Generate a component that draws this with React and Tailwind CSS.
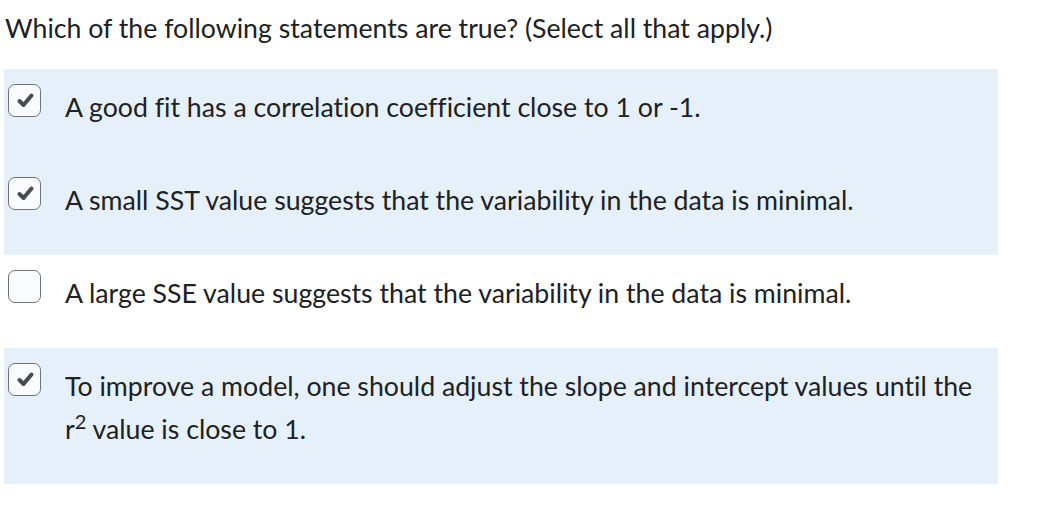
import React from "react";

function Check() {
  return (
    <svg width="31" height="31" viewBox="0 0 31 31" fill="none">
      <path d="M10.5 16 L14.5 20 L22.5 10.5" stroke="#494c4e" strokeWidth="4" strokeLinecap="round" strokeLinejoin="round" />
    </svg>
  );
}

function Row({ checked, children }) {
  return (
    <div className={`flex items-start pl-[4px] pr-[8px] pt-[15px] pb-[33px] ${checked ? "bg-[#e6f0fa]" : "bg-white"}`}>
      <div className="w-[33px] h-[33px] shrink-0 rounded-[7px] border border-[#6e7477] bg-[#f9fbff] flex items-center justify-center">
        {checked && <Check />}
      </div>
      <div className="ml-[24px] mt-[2px] text-[26.7px] leading-[43px] text-[#202122] [font-variant-ligatures:none]">{children}</div>
    </div>
  );
}

export default function App() {
  return (
    <div className="w-[1056px] h-[515px] bg-white" style={{ fontFamily: "Lato, 'Noto Sans', sans-serif" }}>
      <div className="pl-[5px] pt-[8px] text-[26.7px] leading-[40px] text-[#202122] [font-variant-ligatures:none]">
        Which of the following statements are true? (Select all that apply.)
      </div>
      <div className="ml-[4px] w-[994px] mt-[21px]">
        <Row checked>A good fit has a correlation coefficient close to 1 or -1.</Row>
        <Row checked>A small SST value suggests that the variability in the data is minimal.</Row>
        <Row>A large SSE value suggests that the variability in the data is minimal.</Row>
        <Row checked>
          To improve a model, one should adjust the slope and intercept values until the r<sup className="text-[20px]">2</sup> value is close to 1.
        </Row>
      </div>
    </div>
  );
}
